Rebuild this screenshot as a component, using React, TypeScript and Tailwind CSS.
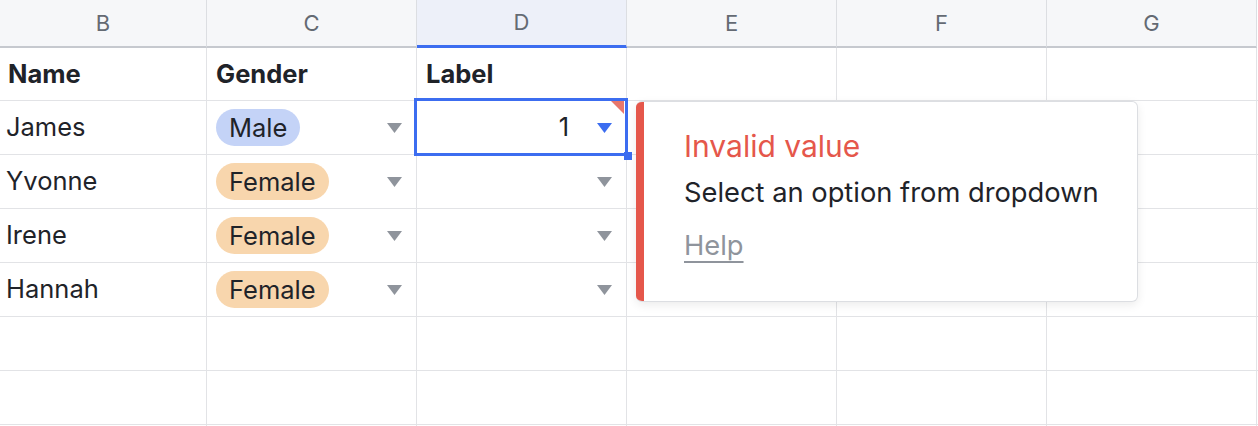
import React from "react";

const Arrow = ({ color }: { color: string }) => (
  <svg width="15" height="10" viewBox="0 0 15 10" className="shrink-0">
    <polygon points="0,0 15,0 7.5,10" fill={color} />
  </svg>
);

const Chip = ({ label, kind }: { label: string; kind: "m" | "f" }) => (
  <span
    className={
      "inline-flex h-[37px] items-center rounded-full px-[13px] text-[25.5px] leading-none text-[#1f2329] " +
      (kind === "m" ? "bg-[#c4d3f7]" : "bg-[#f8d6ad]")
    }
  >
    {label}
  </span>
);

const rows = [
  { name: "James", gender: "Male", kind: "m" as const },
  { name: "Yvonne", gender: "Female", kind: "f" as const },
  { name: "Irene", gender: "Female", kind: "f" as const },
  { name: "Hannah", gender: "Female", kind: "f" as const },
];

const cols = ["B", "C", "D", "E", "F", "G"];

export default function App() {
  return (
    <div className="relative h-[426px] w-[1258px] overflow-hidden bg-white font-['Inter','Liberation_Sans',sans-serif] text-[#1f2329]">
      {/* header */}
      <div className="flex">
        {cols.map((c, i) => (
          <div
            key={c}
            className={
              "flex h-[48px] items-center justify-center border-r border-[#dcdee2] text-[22px] text-[#646a73] " +
              (i === 0 ? "w-[207px] " : "w-[210px] ") +
              (c === "D"
                ? "border-b-[3px] border-b-[#3c6df0] bg-[#edf0f9]"
                : "border-b-2 border-b-[#c6c9cf] bg-[#f6f7f9]")
            }
          >
            {c}
          </div>
        ))}
      </div>

      {/* title row */}
      <div className="flex h-[53px] border-b border-[#e2e3e6]">
        <div className="flex w-[207px] items-center border-r border-[#e2e3e6] px-[8px] text-[25.5px] font-bold">Name</div>
        <div className="flex w-[210px] items-center border-r border-[#e2e3e6] px-[9px] text-[25.5px] font-bold">Gender</div>
        <div className="flex w-[210px] items-center border-r border-[#e2e3e6] px-[9px] text-[25.5px] font-bold">Label</div>
        <div className="w-[210px] border-r border-[#e2e3e6]" />
        <div className="w-[210px] border-r border-[#e2e3e6]" />
        <div className="w-[210px] border-r border-[#e2e3e6]" />
      </div>

      {rows.map((r, idx) => (
        <div key={r.name} className="flex h-[54px] border-b border-[#e2e3e6]">
          <div className="flex w-[207px] items-center border-r border-[#e2e3e6] px-[6px] text-[25.5px]">{r.name}</div>
          <div className="flex w-[210px] items-center justify-between border-r border-[#e2e3e6] pl-[9px] pr-[14px]">
            <Chip label={r.gender} kind={r.kind} />
            <Arrow color="#8f949c" />
          </div>
          <div className="relative flex w-[210px] items-center justify-end border-r border-[#e2e3e6] pr-[14px]">
            {idx === 0 && (
              <>
                <span className="mr-[28px] text-[25.5px]">1</span>
                <div className="absolute -left-[3px] -top-[3px] -right-[2px] -bottom-[2px] z-10 border-[3px] border-[#3c6df0]" />
                <div className="absolute right-[2px] top-0 z-20 h-[13px] w-[13px] bg-[#e8776c] [clip-path:polygon(0_0,100%_0,100%_100%)]" />
                <div className="absolute left-[207px] top-[51px] z-20 h-[8px] w-[8px] bg-[#3c6df0]" />
              </>
            )}
            <Arrow color={idx === 0 ? "#3c6df0" : "#8f949c"} />
          </div>
          <div className="w-[210px] border-r border-[#e2e3e6]" />
          <div className="w-[210px] border-r border-[#e2e3e6]" />
          <div className="w-[210px] border-r border-[#e2e3e6]" />
        </div>
      ))}

      {[0, 1, 2].map((k) => (
        <div key={k} className="flex h-[54px] border-b border-[#e2e3e6]">
          <div className="w-[207px] border-r border-[#e2e3e6]" />
          {[0, 1, 2, 3, 4].map((j) => (
            <div key={j} className="w-[210px] border-r border-[#e2e3e6]" />
          ))}
        </div>
      ))}

      {/* validation popup */}
      <div className="absolute left-[636px] top-[101px] z-30 flex h-[201px] w-[502px] overflow-hidden rounded-[6px] border border-l-0 border-[#dcdee2] bg-white shadow-[0_3px_10px_rgba(0,0,0,0.08)]">
        <div className="w-[8px] shrink-0 bg-[#e5574b]" />
        <div className="flex flex-col pl-[40px] pt-[24px]">
          <div className="text-[30px] leading-[40px] text-[#e5574b]">Invalid value</div>
          <div className="mt-[7px] text-[27.3px] leading-[40px] text-[#1f2329]">Select an option from dropdown</div>
          <div className="mt-[13px] self-start text-[27.3px] leading-[40px] text-[#8f949c] underline decoration-2 underline-offset-[6px]">
            Help
          </div>
        </div>
      </div>
    </div>
  );
}
